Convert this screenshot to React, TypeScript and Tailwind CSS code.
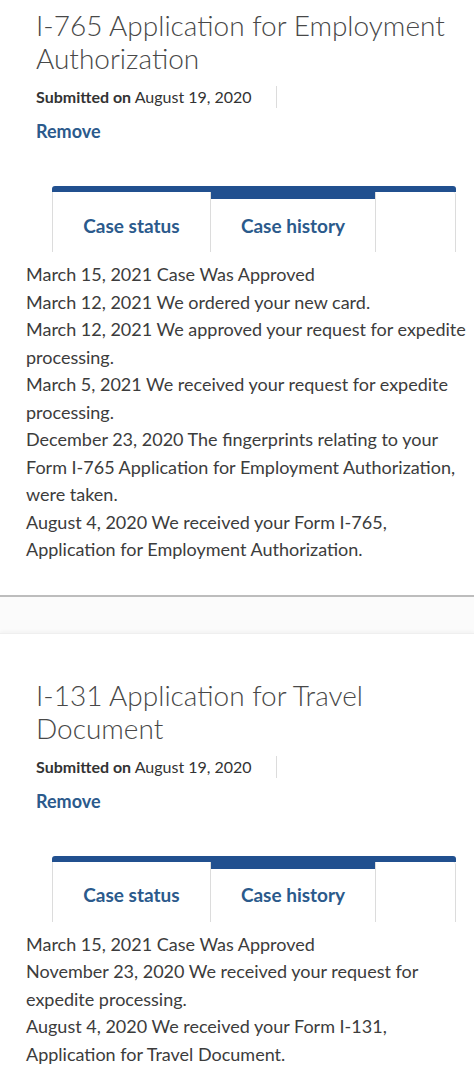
import React from "react";

interface CaseCard {
  title: string[];
  submitted: string;
  history: string[][];
}

const CASES: CaseCard[] = [
  {
    title: ["I-765 Application for Employment", "Authorization"],
    submitted: "August 19, 2020",
    history: [
      ["March 15, 2021 Case Was Approved"],
      ["March 12, 2021 We ordered your new card."],
      ["March 12, 2021 We approved your request for expedite", "processing."],
      ["March 5, 2021 We received your request for expedite", "processing."],
      [
        "December 23, 2020 The fingerprints relating to your",
        "Form I-765 Application for Employment Authorization,",
        "were taken.",
      ],
      ["August 4, 2020 We received your Form I-765,", "Application for Employment Authorization."],
    ],
  },
  {
    title: ["I-131 Application for Travel", "Document"],
    submitted: "August 19, 2020",
    history: [
      ["March 15, 2021 Case Was Approved"],
      ["November 23, 2020 We received your request for", "expedite processing."],
      ["August 4, 2020 We received your Form I-131,", "Application for Travel Document."],
    ],
  },
];

const FONT = { fontFamily: "Lato, 'Open Sans', sans-serif" };

function Tabs() {
  return (
    <div className="ml-[52px] w-[404px]">
      <div className="flex h-[66px] rounded-t-[3px] border-t-[6px] border-[#21508f]">
        <div className="flex w-[158px] items-center justify-center border-l border-[#dcdcdc] pt-[8px] text-[19px] font-bold text-[#2b5a8c]">
          Case status
        </div>
        <div className="flex w-[166px] items-center justify-center border-x border-[#dcdcdc] pt-[8px] text-[19px] font-bold text-[#2b5a8c] shadow-[inset_0_7px_0_#21508f]">
          Case history
        </div>
        <div className="flex-1 rounded-tr-[3px] border-r border-[#dcdcdc]" />
      </div>
    </div>
  );
}

function Card({ data, first }: { data: CaseCard; first: boolean }) {
  return (
    <section
      className={`bg-white ${
        first
          ? "border-b-2 border-[#bdbdbd] pb-[31px] shadow-[0_2px_3px_rgba(0,0,0,0.08)]"
          : "border-t border-[#efefef] pt-[36px] shadow-[0_-2px_3px_rgba(0,0,0,0.03)]"
      }`}
    >
      <div className="pl-[36px]">
        <h2 className="pt-[9px] text-[28px] font-light leading-[33px] text-[#484848]">
          {data.title.map((line) => (
            <div key={line}>{line}</div>
          ))}
        </h2>
        <div className="mt-[11px] flex">
          <div className="border-r border-[#dcdcdc] pr-[24px] text-[16px] leading-[22px] text-[#333]">
            <span className="font-bold">Submitted on</span> {data.submitted}
          </div>
        </div>
        <div className="mt-[12px] text-[18px] font-bold leading-[22px] text-[#2b5a8c]">Remove</div>
      </div>

      <div className="mt-[44px]">
        <Tabs />
      </div>

      <div className="mt-[9px] pl-[26px] text-[18px] leading-[27.5px] text-[#3c3c3c]">
        {data.history.map((entry, i) => (
          <p key={i} className="whitespace-nowrap">
            {entry.map((line) => (
              <span key={line} className="block">
                {line}
              </span>
            ))}
          </p>
        ))}
      </div>
    </section>
  );
}

export default function App() {
  return (
    <div className="min-h-[1075px] w-[474px] overflow-hidden bg-white" style={FONT}>
      <Card data={CASES[0]} first />
      <div className="h-[36px] bg-[#fbfbfb]" />
      <Card data={CASES[1]} first={false} />
    </div>
  );
}
